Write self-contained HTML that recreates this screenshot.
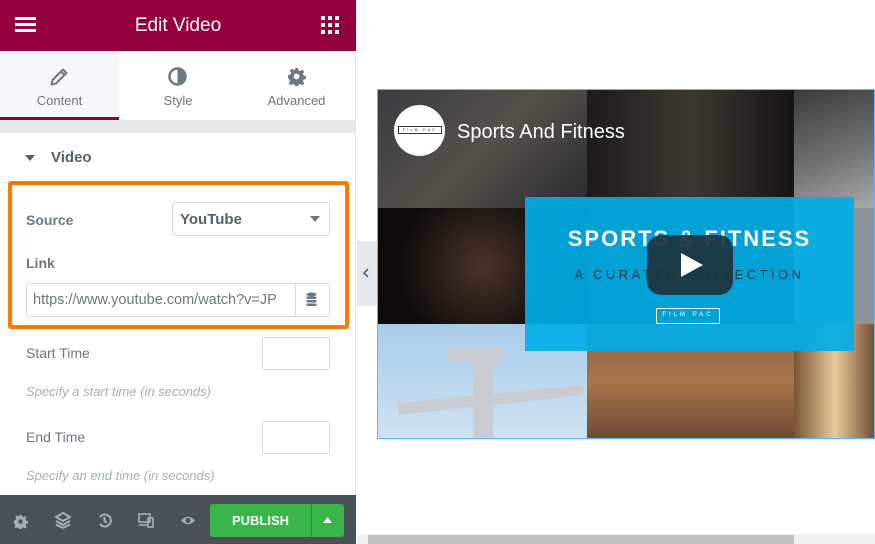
<!DOCTYPE html>
<html><head><meta charset="utf-8"><style>
*{box-sizing:border-box;margin:0;padding:0}
body{width:875px;height:544px;overflow:hidden;background:#fff;font-family:"Liberation Sans",sans-serif;position:relative}
.a{position:absolute}
.lbl{color:#6d7882;font-size:14px}
.b{font-weight:bold;color:#6d7882;font-size:14px}
.hint{color:#a4afb7;font-size:13px;font-style:italic}
.inp{border:1px solid #d5dadf;border-radius:3px;background:#fff}
</style></head><body>
<div class="a" style="left:0;top:0;width:356px;height:544px;background:#fff;border-right:1px solid #e6e9ec"></div>
<div class="a" style="left:0;top:0;width:356px;height:51px;background:#93003c"></div>
<div class="a" style="left:15px;top:17px;width:21px;height:3px;background:#fff;box-shadow:0 6px 0 #fff,0 12px 0 #fff"></div>
<div class="a" style="left:0;top:15px;width:356px;text-align:center;color:#fff;font-size:19px">Edit Video</div>
<svg class="a" style="left:321px;top:16px" width="18" height="18"><g fill="#fff"><rect x="0" y="0" width="4" height="4"/><rect x="7" y="0" width="4" height="4"/><rect x="14" y="0" width="4" height="4"/><rect x="0" y="7" width="4" height="4"/><rect x="7" y="7" width="4" height="4"/><rect x="14" y="7" width="4" height="4"/><rect x="0" y="14" width="4" height="4"/><rect x="7" y="14" width="4" height="4"/><rect x="14" y="14" width="4" height="4"/></g></svg>
<div class="a" style="left:0;top:51px;width:119px;height:69px;background:#f6f7f8;border-bottom:3px solid #93003c"></div>
<svg class="a" style="left:50px;top:67px" width="19" height="19"><path d="M1.5 17.5 L2.5 13 L13 2.5 L16.5 6 L6 16.5 Z" fill="none" stroke="#6d7882" stroke-width="2" stroke-linejoin="round"/><path d="M11 4.5L14.5 8" stroke="#6d7882" stroke-width="2"/></svg>
<div class="a lbl" style="left:0;top:93px;width:119px;text-align:center;font-size:13px">Content</div>
<svg class="a" style="left:168px;top:67px" width="19" height="19"><circle cx="9.5" cy="9.5" r="8" fill="none" stroke="#6d7882" stroke-width="2.5"/><path d="M9.5 1.5 A8 8 0 0 1 9.5 17.5Z" fill="#6d7882"/></svg>
<div class="a lbl" style="left:119px;top:93px;width:118px;text-align:center;font-size:13px">Style</div>
<svg class="a" style="left:287px;top:67px" width="19" height="19" viewBox="0 0 20 20"><path fill="#6d7882" d="M8.5 1h3l.5 2.5 2 .9 2.1-1.5 2.1 2.1-1.5 2.1.9 2 2.5.5v3l-2.5.5-.9 2 1.5 2.1-2.1 2.1-2.1-1.5-2 .9-.5 2.5h-3l-.5-2.5-2-.9-2.1 1.5-2.1-2.1 1.5-2.1-.9-2L1 11.5v-3l2.5-.5.9-2-1.5-2.1 2.1-2.1 2.1 1.5 2-.9z"/><circle cx="10" cy="10" r="3" fill="#fff"/></svg>
<div class="a lbl" style="left:237px;top:93px;width:119px;text-align:center;font-size:13px">Advanced</div>
<div class="a" style="left:0;top:120px;width:356px;height:13px;background:#e6e9ec"></div>
<svg class="a" style="left:25px;top:155px" width="10" height="6"><path d="M0 0H10L5 6Z" fill="#556068"/></svg>
<div class="a" style="left:51px;top:149px;font-weight:bold;color:#556068;font-size:15px">Video</div>
<div class="a" style="left:0;top:182px;width:356px;height:1px;background:#e6e9ec"></div>
<div class="a" style="left:8px;top:181px;width:341px;height:148px;border:4px solid #ff7b00;border-radius:3px"></div>
<div class="a b" style="left:26px;top:212px">Source</div>
<div class="a inp" style="left:172px;top:202px;width:158px;height:34px"></div>
<div class="a b" style="left:180px;top:211px;color:#556068;font-size:15px">YouTube</div>
<svg class="a" style="left:310px;top:216px" width="10" height="6"><path d="M0 0H10L5 6Z" fill="#6d7882"/></svg>
<div class="a b" style="left:26px;top:255px">Link</div>
<div class="a inp" style="left:26px;top:283px;width:304px;height:34px"></div>
<div class="a" style="left:295px;top:284px;width:1px;height:32px;background:#d5dadf"></div>
<div class="a" style="left:33px;top:292px;color:#6d7882;font-size:14.5px">https://www.youtube.com/watch?v=JP</div>
<svg class="a" style="left:306px;top:292px" width="11" height="14"><g fill="#6d7882"><ellipse cx="5.5" cy="2.5" rx="5" ry="2"/><rect x="0.5" y="4.5" width="10" height="2.5" rx="1"/><rect x="0.5" y="8" width="10" height="2.5" rx="1"/><rect x="0.5" y="11.5" width="10" height="2.5" rx="1"/></g></svg>
<div class="a lbl" style="left:26px;top:345px">Start Time</div>
<div class="a inp" style="left:262px;top:337px;width:68px;height:33px"></div>
<div class="a hint" style="left:26px;top:384px">Specify a start time (in seconds)</div>
<div class="a lbl" style="left:26px;top:429px">End Time</div>
<div class="a inp" style="left:262px;top:421px;width:68px;height:33px"></div>
<div class="a hint" style="left:26px;top:468px">Specify an end time (in seconds)</div>
<div class="a" style="left:0;top:495px;width:356px;height:49px;background:#495157"></div>
<svg class="a" style="left:13px;top:514px" width="15" height="15" viewBox="0 0 20 20"><path fill="#a4afb7" d="M8.5 1h3l.5 2.5 2 .9 2.1-1.5 2.1 2.1-1.5 2.1.9 2 2.5.5v3l-2.5.5-.9 2 1.5 2.1-2.1 2.1-2.1-1.5-2 .9-.5 2.5h-3l-.5-2.5-2-.9-2.1 1.5-2.1-2.1 1.5-2.1-.9-2L1 11.5v-3l2.5-.5.9-2-1.5-2.1 2.1-2.1 2.1 1.5 2-.9z"/><circle cx="10" cy="10" r="3" fill="#495157"/></svg>
<svg class="a" style="left:55px;top:512px" width="16" height="17"><g fill="none" stroke="#a4afb7" stroke-width="2"><path d="M8 1L15 5L8 9L1 5Z"/><path d="M1 9L8 13L15 9"/><path d="M1 12.5L8 16L15 12.5"/></g></svg>
<svg class="a" style="left:97px;top:513px" width="15" height="15"><path d="M3 4 A6 6 0 1 1 3 11" fill="none" stroke="#a4afb7" stroke-width="2"/><path d="M7.5 4V8L10 10" fill="none" stroke="#a4afb7" stroke-width="2"/></svg>
<svg class="a" style="left:138px;top:513px" width="17" height="15"><g fill="none" stroke="#a4afb7" stroke-width="1.6"><rect x="1" y="1" width="11" height="8"/><rect x="10" y="5" width="5" height="9"/><path d="M1 12H9"/></g></svg>
<svg class="a" style="left:180px;top:514px" width="16" height="13"><path d="M1 6.5Q8 -1 15 6.5Q8 14 1 6.5Z" fill="#a4afb7"/><circle cx="8" cy="6.5" r="2.5" fill="#495157"/></svg>
<div class="a" style="left:210px;top:504px;width:134px;height:33px;background:#39b54a;border-radius:3px"></div>
<div class="a" style="left:311px;top:504px;width:1px;height:33px;background:#2d8a3a"></div>
<div class="a" style="left:210px;top:513px;width:101px;text-align:center;color:#fff;font-weight:bold;font-size:13px">PUBLISH</div>
<svg class="a" style="left:323px;top:517px" width="9" height="6"><path d="M0 6H9L4.5 0Z" fill="#fff"/></svg>
<div class="a" style="left:357px;top:241px;width:20px;height:65px;background:#e6e9ec"></div>
<svg class="a" style="left:362px;top:268px" width="7" height="10"><path d="M6 1L2 5L6 9" fill="none" stroke="#556068" stroke-width="1.6"/></svg>
<div class="a" style="left:357px;top:534px;width:518px;height:10px;background:#f1f1f1"></div>
<div class="a" style="left:368px;top:535px;width:426px;height:9px;background:#c1c1c1"></div>
<div class="a" style="left:377px;top:89px;width:498px;height:350px;background:#222;border:1px solid #4fc3f7;overflow:hidden">
 <div class="a" style="left:0;top:0;width:209px;height:118px;background:linear-gradient(135deg,#3a3d42,#55504a 50%,#2a2c30)"></div>
 <div class="a" style="left:209px;top:0;width:207px;height:118px;background:linear-gradient(90deg,#1c1b1a,#3d3832 50%,#161514)"></div>
 <div class="a" style="left:416px;top:0;width:82px;height:118px;background:linear-gradient(160deg,#3a3a3a,#777 60%,#a9a9a9)"></div>
 <div class="a" style="left:0;top:118px;width:209px;height:116px;background:radial-gradient(circle at 50% 50%,#4a3328,#0e0c0b 70%)"></div>
 <div class="a" style="left:416px;top:118px;width:82px;height:116px;background:#8c939a"></div>
 <div class="a" style="left:0;top:234px;width:209px;height:116px;background:linear-gradient(180deg,#a9cbe9,#cfe3f3)"></div>
 <div class="a" style="left:209px;top:234px;width:207px;height:116px;background:linear-gradient(180deg,#8a6142,#a8754b 50%,#6a4a33)"></div>
 <div class="a" style="left:416px;top:234px;width:82px;height:116px;background:linear-gradient(90deg,#7a5535,#e8c99a 50%,#6d4b30)"></div>
 <svg class="a" style="left:20px;top:235px" width="190" height="115"><g fill="#c9ccd0"><rect x="50" y="22" width="55" height="14"/><rect x="75" y="30" width="20" height="85"/><polygon points="0,78 185,60 185,70 0,90"/></g></svg>
 <div class="a" style="left:147px;top:107px;width:329px;height:154px;background:rgba(0,174,230,0.92)"></div>
 <div class="a" style="left:147px;top:136px;width:329px;text-align:center;color:#fff;font-weight:bold;font-size:22px;letter-spacing:2px">SPORTS &amp; FITNESS</div>
 <div class="a" style="left:147px;top:177px;width:329px;text-align:center;color:#1b3848;font-size:13px;letter-spacing:3.5px">A CURATED COLLECTION</div>
 <div class="a" style="left:278px;top:218px;width:64px;height:16px;border:1.5px solid #fff;color:#fff;font-size:6px;letter-spacing:3px;text-align:center;line-height:13px">FILM PAC</div>
 <div class="a" style="left:269px;top:145px;width:86px;height:60px;background:rgba(30,50,60,0.92);border-radius:14px"></div>
 <svg class="a" style="left:301px;top:162px" width="26" height="26"><path d="M2 1L24 13L2 25Z" fill="#fff"/></svg>
 <div class="a" style="left:16px;top:15px;width:51px;height:51px;border-radius:50%;background:#fff"></div>
 <div class="a" style="left:20px;top:36px;width:44px;height:8px;border:1px solid #333;font-size:4px;letter-spacing:2px;text-align:center;line-height:6px;color:#333">FILM PAC</div>
 <div class="a" style="left:79px;top:31px;color:#fff;font-size:20px">Sports And Fitness</div>
</div>
</body></html>
